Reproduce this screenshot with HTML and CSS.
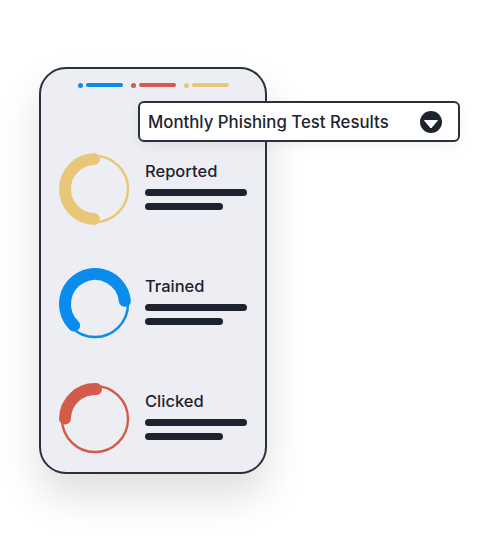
FILE: index.html
```html
<!DOCTYPE html>
<html>
<head>
<meta charset="utf-8">
<link rel="stylesheet" href="styles.css">
</head>
<body>
<div class="stage">
  <div class="phone">
    <div class="dots">
      <span class="dot blue"></span><span class="line blue"></span>
      <span class="dot red gap"></span><span class="line red"></span>
      <span class="dot yellow gap"></span><span class="line yellow"></span>
    </div>
    <div class="rows">
      <div class="row">
        <svg class="ring" width="76" height="76" viewBox="0 0 76 76">
          <circle cx="38" cy="38" r="33" fill="none" stroke="#e9c779" stroke-width="2.4"/>
          <path d="M 36.95 67.98 A 30 30 0 0 1 36.95 8.02" fill="none" stroke="#e9c779" stroke-width="12" stroke-linecap="round"/>
        </svg>
        <div class="info">
          <div class="title">Reported</div>
          <div class="bar long"></div>
          <div class="bar short"></div>
        </div>
      </div>
      <div class="row">
        <svg class="ring" width="76" height="76" viewBox="0 0 76 76">
          <circle cx="38" cy="38" r="33" fill="none" stroke="#0a8cef" stroke-width="2.4"/>
          <path d="M 17.16 59.58 A 30 30 0 1 1 67.84 34.86" fill="none" stroke="#0a8cef" stroke-width="12" stroke-linecap="round"/>
        </svg>
        <div class="info">
          <div class="title">Trained</div>
          <div class="bar long"></div>
          <div class="bar short"></div>
        </div>
      </div>
      <div class="row">
        <svg class="ring" width="76" height="76" viewBox="0 0 76 76">
          <circle cx="38" cy="38" r="33" fill="none" stroke="#d35b49" stroke-width="2.4"/>
          <path d="M 8.0 37.48 A 30 30 0 0 1 39.05 8.02" fill="none" stroke="#d35b49" stroke-width="12" stroke-linecap="round"/>
        </svg>
        <div class="info">
          <div class="title">Clicked</div>
          <div class="bar long"></div>
          <div class="bar short"></div>
        </div>
      </div>
    </div>
  </div>
  <div class="dropdown">
    <span class="dd-label">Monthly Phishing Test Results</span>
    <svg class="dd-icon" width="22" height="22" viewBox="0 0 22 22">
      <circle cx="11" cy="11" r="11" fill="#1d2430"/>
      <polygon points="4.5,9.5 17.5,9.5 11,17" fill="#ffffff" stroke="#ffffff" stroke-width="1" stroke-linejoin="round"/>
    </svg>
  </div>
</div>
</body>
</html>
```
FILE: styles.css
```css
* { box-sizing: border-box; }
html, body { margin: 0; padding: 0; background: #ffffff; }
body { font-family: Inter, "Noto Sans", sans-serif; color: #1d2430; }

.stage {
  position: relative;
  width: 500px;
  height: 552px;
  overflow: hidden;
  padding: 67px 0 0 39px;
}

.phone {
  width: 228px;
  height: 407px;
  border: 2px solid #2a313b;
  border-radius: 27px;
  background: #eceef3;
  box-shadow: 0 22px 40px rgba(0, 0, 0, 0.13);
}

.dots {
  display: flex;
  justify-content: center;
  align-items: center;
  margin-top: 14px;
  height: 4px;
}
.dot { width: 5px; height: 5px; border-radius: 50%; }
.dot.gap { margin-left: 8px; }
.line { width: 37px; height: 3.5px; border-radius: 2px; margin-left: 3px; }
.blue { background: #0a8cef; }
.red { background: #d35b49; }
.yellow { background: #e9c779; }

.rows {
  display: flex;
  flex-direction: column;
  gap: 39px;
  margin-top: 64px;
  padding-left: 15.5px;
}
.row { display: flex; align-items: flex-start; }
.ring { display: block; flex: none; }
.info { margin-left: 12.5px; margin-top: 10px; }
.title {
  font-size: 16.5px;
  line-height: 20px;
  font-weight: 500;
  color: #1d2430;
}
.bar { height: 7px; border-radius: 3.5px; background: #1d2430; }
.bar.long { width: 102px; margin-top: 8px; }
.bar.short { width: 78px; margin-top: 7px; }

.dropdown {
  position: absolute;
  left: 138px;
  top: 101px;
  width: 322px;
  height: 41px;
  border: 2px solid #2a313b;
  border-radius: 6px;
  background: #ffffff;
  display: flex;
  align-items: center;
  justify-content: space-between;
  padding: 0 16px 0 8px;
  box-shadow: 0 4px 12px rgba(0, 0, 0, 0.06);
}
.dd-label {
  font-size: 16.8px;
  font-weight: 500;
  color: #1d2430;
  white-space: nowrap;
}
.dd-icon { display: block; flex: none; }
```
